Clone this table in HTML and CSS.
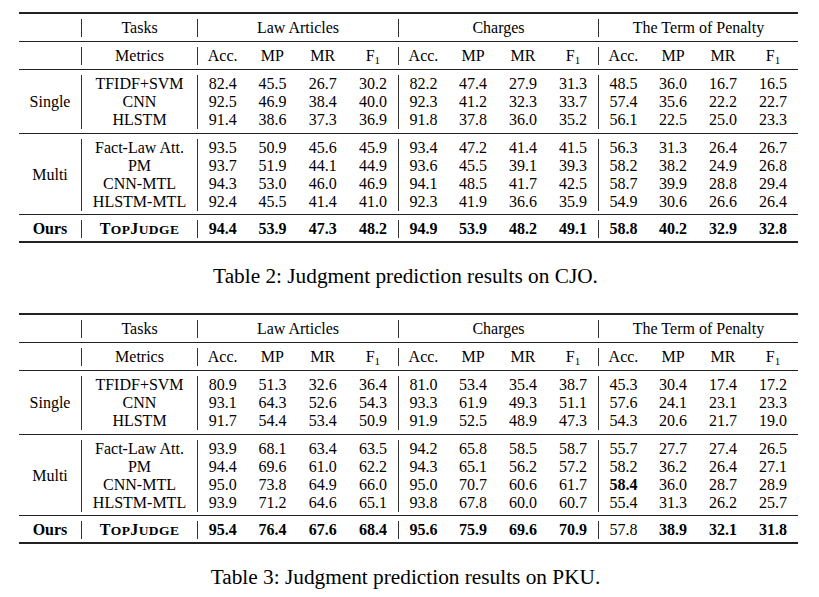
FILE: index.html
```html
<!DOCTYPE html>
<html lang="en">
<head>
<meta charset="utf-8">
<title>Judgment prediction results</title>
<link rel="stylesheet" href="styles.css">
</head>
<body>
<main class="page">

<section class="tbl first">
  <div class="blk">
    <div></div><div class="b">Tasks</div><div class="b span4">Law Articles</div><div class="b span4">Charges</div><div class="b span4">The Term of Penalty</div>
  </div>
  <div class="blk">
    <div></div><div class="b">Metrics</div>
    <div class="b">Acc.</div><div>MP</div><div>MR</div><div>F<sub>1</sub></div>
    <div class="b">Acc.</div><div>MP</div><div>MR</div><div>F<sub>1</sub></div>
    <div class="b">Acc.</div><div>MP</div><div>MR</div><div>F<sub>1</sub></div>
  </div>
  <div class="blk">
    <div class="grp r3">Single</div>
    <div class="b">TFIDF+SVM</div><div class="b">82.4</div><div>45.5</div><div>26.7</div><div>30.2</div><div class="b">82.2</div><div>47.4</div><div>27.9</div><div>31.3</div><div class="b">48.5</div><div>36.0</div><div>16.7</div><div>16.5</div>
    <div class="b">CNN</div><div class="b">92.5</div><div>46.9</div><div>38.4</div><div>40.0</div><div class="b">92.3</div><div>41.2</div><div>32.3</div><div>33.7</div><div class="b">57.4</div><div>35.6</div><div>22.2</div><div>22.7</div>
    <div class="b">HLSTM</div><div class="b">91.4</div><div>38.6</div><div>37.3</div><div>36.9</div><div class="b">91.8</div><div>37.8</div><div>36.0</div><div>35.2</div><div class="b">56.1</div><div>22.5</div><div>25.0</div><div>23.3</div>
  </div>
  <div class="blk multi">
    <div class="grp r4">Multi</div>
    <div class="b">Fact-Law Att.</div><div class="b">93.5</div><div>50.9</div><div>45.6</div><div>45.9</div><div class="b">93.4</div><div>47.2</div><div>41.4</div><div>41.5</div><div class="b">56.3</div><div>31.3</div><div>26.4</div><div>26.7</div>
    <div class="b">PM</div><div class="b">93.7</div><div>51.9</div><div>44.1</div><div>44.9</div><div class="b">93.6</div><div>45.5</div><div>39.1</div><div>39.3</div><div class="b">58.2</div><div>38.2</div><div>24.9</div><div>26.8</div>
    <div class="b">CNN-MTL</div><div class="b">94.3</div><div>53.0</div><div>46.0</div><div>46.9</div><div class="b">94.1</div><div>48.5</div><div>41.7</div><div>42.5</div><div class="b">58.7</div><div>39.9</div><div>28.8</div><div>29.4</div>
    <div class="b">HLSTM-MTL</div><div class="b">92.4</div><div>45.5</div><div>41.4</div><div>41.0</div><div class="b">92.3</div><div>41.9</div><div>36.6</div><div>35.9</div><div class="b">54.9</div><div>30.6</div><div>26.6</div><div>26.4</div>
  </div>
  <div class="blk last ours">
    <div>Ours</div>
    <div class="b sc">T<span class="lc">op</span>J<span class="lc">udge</span></div><div class="b">94.4</div><div>53.9</div><div>47.3</div><div>48.2</div><div class="b">94.9</div><div>53.9</div><div>48.2</div><div>49.1</div><div class="b">58.8</div><div>40.2</div><div>32.9</div><div>32.8</div>
  </div>
</section>
<p class="caption">Table 2: Judgment prediction results on CJO.</p>

<section class="tbl">
  <div class="blk">
    <div></div><div class="b">Tasks</div><div class="b span4">Law Articles</div><div class="b span4">Charges</div><div class="b span4">The Term of Penalty</div>
  </div>
  <div class="blk">
    <div></div><div class="b">Metrics</div>
    <div class="b">Acc.</div><div>MP</div><div>MR</div><div>F<sub>1</sub></div>
    <div class="b">Acc.</div><div>MP</div><div>MR</div><div>F<sub>1</sub></div>
    <div class="b">Acc.</div><div>MP</div><div>MR</div><div>F<sub>1</sub></div>
  </div>
  <div class="blk">
    <div class="grp r3">Single</div>
    <div class="b">TFIDF+SVM</div><div class="b">80.9</div><div>51.3</div><div>32.6</div><div>36.4</div><div class="b">81.0</div><div>53.4</div><div>35.4</div><div>38.7</div><div class="b">45.3</div><div>30.4</div><div>17.4</div><div>17.2</div>
    <div class="b">CNN</div><div class="b">93.1</div><div>64.3</div><div>52.6</div><div>54.3</div><div class="b">93.3</div><div>61.9</div><div>49.3</div><div>51.1</div><div class="b">57.6</div><div>24.1</div><div>23.1</div><div>23.3</div>
    <div class="b">HLSTM</div><div class="b">91.7</div><div>54.4</div><div>53.4</div><div>50.9</div><div class="b">91.9</div><div>52.5</div><div>48.9</div><div>47.3</div><div class="b">54.3</div><div>20.6</div><div>21.7</div><div>19.0</div>
  </div>
  <div class="blk multi">
    <div class="grp r4">Multi</div>
    <div class="b">Fact-Law Att.</div><div class="b">93.9</div><div>68.1</div><div>63.4</div><div>63.5</div><div class="b">94.2</div><div>65.8</div><div>58.5</div><div>58.7</div><div class="b">55.7</div><div>27.7</div><div>27.4</div><div>26.5</div>
    <div class="b">PM</div><div class="b">94.4</div><div>69.6</div><div>61.0</div><div>62.2</div><div class="b">94.3</div><div>65.1</div><div>56.2</div><div>57.2</div><div class="b">58.2</div><div>36.2</div><div>26.4</div><div>27.1</div>
    <div class="b">CNN-MTL</div><div class="b">95.0</div><div>73.8</div><div>64.9</div><div>66.0</div><div class="b">95.0</div><div>70.7</div><div>60.6</div><div>61.7</div><div class="b best">58.4</div><div>36.0</div><div>28.7</div><div>28.9</div>
    <div class="b">HLSTM-MTL</div><div class="b">93.9</div><div>71.2</div><div>64.6</div><div>65.1</div><div class="b">93.8</div><div>67.8</div><div>60.0</div><div>60.7</div><div class="b">55.4</div><div>31.3</div><div>26.2</div><div>25.7</div>
  </div>
  <div class="blk last ours">
    <div>Ours</div>
    <div class="b sc">T<span class="lc">op</span>J<span class="lc">udge</span></div><div class="b">95.4</div><div>76.4</div><div>67.6</div><div>68.4</div><div class="b">95.6</div><div>75.9</div><div>69.6</div><div>70.9</div><div class="b plain">57.8</div><div>38.9</div><div>32.1</div><div>31.8</div>
  </div>
</section>
<p class="caption">Table 3: Judgment prediction results on PKU.</p>

</main>
</body>
</html>
```

FILE: styles.css
```css
html, body {
  margin: 0;
  padding: 0;
  background: #fff;
}

.page {
  width: 779px;
  padding: 0 0 0 19px;
  font-family: "Liberation Serif", "Times New Roman", serif;
  color: #000;
}

.tbl {
  border-top: 2px solid #222;
  margin-top: 25px;
}

.tbl.first {
  margin-top: 12px;
}

.blk {
  display: grid;
  grid-template-columns: 62px 116px repeat(4, 50.25px) repeat(8, 50px);
  padding: 5px 0 4px;
  border-bottom: 1px solid #222;
  font-size: 16px;
  line-height: 18px;
}

.blk.multi {
  padding-bottom: 3px;
}

.blk.last {
  border-bottom: 2px solid #222;
  padding-bottom: 3px;
}

.blk > div {
  text-align: center;
  white-space: nowrap;
}

.blk > .b {
  border-left: 1px solid #333;
}

.span4 {
  grid-column: span 4;
}

.grp {
  align-self: center;
}

.r3 {
  grid-row: span 3;
}

.r4 {
  grid-row: span 4;
}

.ours > div {
  font-weight: bold;
}

.ours > .plain {
  font-weight: normal;
}

.best {
  font-weight: bold;
}

.sc {
  letter-spacing: 0.4px;
}

.lc {
  text-transform: uppercase;
  font-size: 13.5px;
  line-height: 0;
}

sub {
  font-size: 11px;
  line-height: 0;
  vertical-align: -3px;
}

.caption {
  margin: 21px 0 0;
  padding-right: 6px;
  text-align: center;
  font-size: 21.3px;
  line-height: 24px;
}
```
